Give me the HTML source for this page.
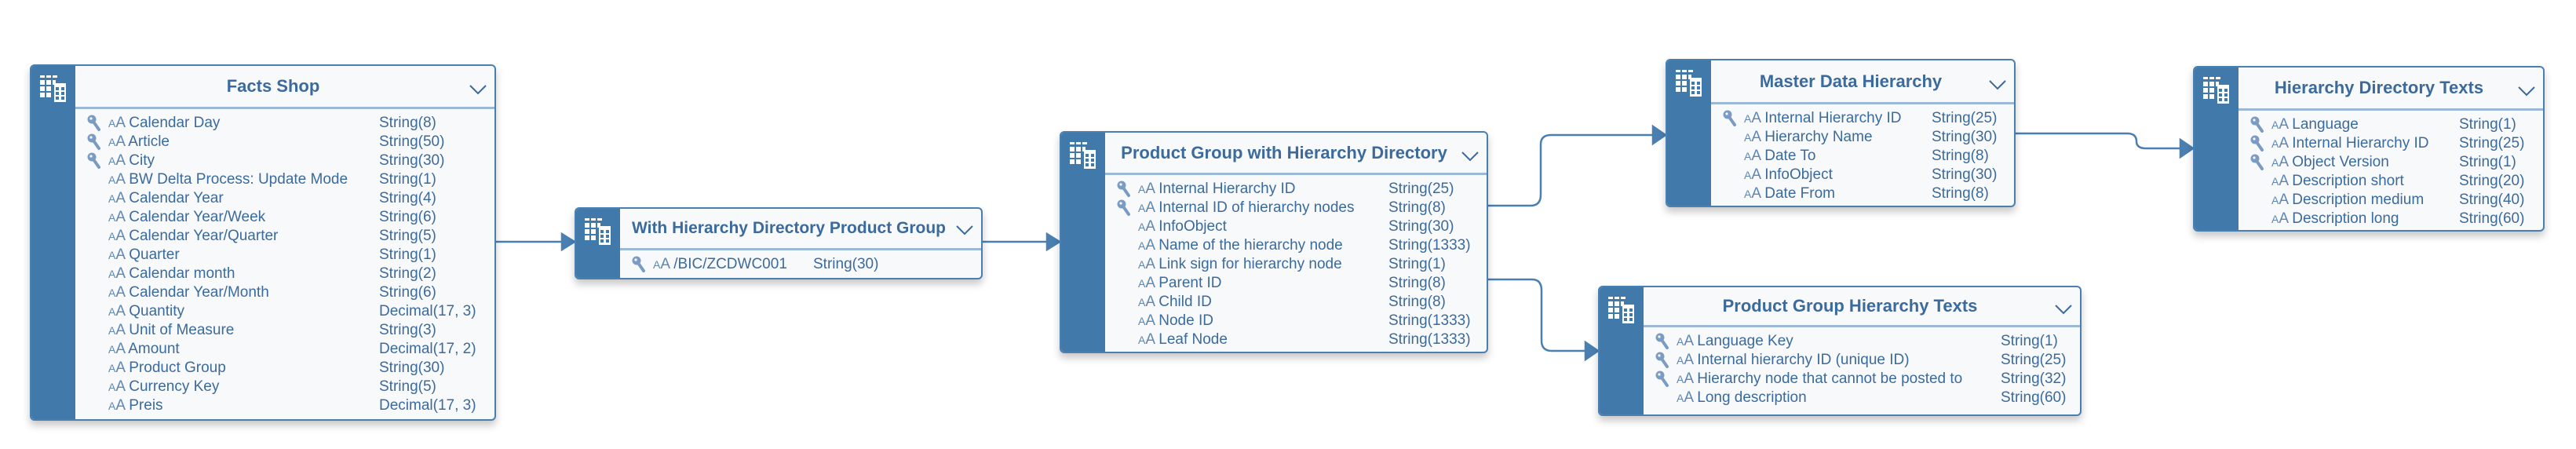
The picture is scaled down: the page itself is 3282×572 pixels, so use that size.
<!DOCTYPE html>
<html><head><meta charset="utf-8">
<style>
body{margin:0;width:3282px;height:572px;background:#fff;position:relative;overflow:hidden;font-family:"Liberation Sans",sans-serif;color:#3b6a9c}
.box{position:absolute;background:#f8f9fa;border:2px solid #4a7fb2;border-radius:6px;box-shadow:0 6px 10px rgba(0,0,0,.22);box-sizing:border-box;overflow:hidden}
.side{position:absolute;left:0;top:0;bottom:0;width:56px;background:#4279ab}
.side svg{position:absolute;left:8px;top:10px}
.hdr{position:absolute;left:56px;right:0;top:0;border-bottom:3px solid #9bb8d6;display:flex;align-items:center;justify-content:center;font-weight:bold;font-size:22px;color:#3b6a9c}
.chev{position:absolute;right:10px;top:50%;margin-top:-9px}
.row{position:absolute;height:24px;line-height:24px;font-size:19px;white-space:nowrap}
.aa{font-size:14px;color:#5f87b3}.aa b{font-weight:normal;font-size:19px}
.ty{position:absolute;font-size:19px;line-height:24px;white-space:nowrap}
.key{position:absolute}
</style></head><body>
<svg width="3282" height="572" style="position:absolute;left:0;top:0" fill="none" stroke="#4a7fb2" stroke-width="2.5">
<path d="M632 308H716"/><path d="M716 298L732 308L716 318Z" fill="#4a7fb2"/>
<path d="M1252 308H1334"/><path d="M1334 298L1350 308L1334 318Z" fill="#4a7fb2"/>
<path d="M1896 262H1950Q1963 262 1963 248V184Q1963 172 1976 172H2106"/><path d="M2106 161L2122 172L2106 183Z" fill="#4a7fb2"/>
<path d="M2568 170H2710Q2722 170 2722 180Q2722 189 2734 189H2778"/><path d="M2778 178L2794 189L2778 200Z" fill="#4a7fb2"/>
<path d="M1896 356H1952Q1964 356 1964 370V434Q1964 447 1977 447H2020"/><path d="M2020 436L2036 447L2020 458Z" fill="#4a7fb2"/>
</svg>
<div id="c"></div>
<script>
const ic='<svg width="40" height="40" viewBox="0 0 40 40" fill="#fff"><rect x="3" y="2" width="6" height="3"/><rect x="11" y="2" width="6" height="3"/><rect x="19" y="2" width="6" height="3"/><g><rect x="3" y="8" width="6" height="6"/><rect x="11" y="8" width="6" height="6"/><rect x="19" y="8" width="4" height="6"/><rect x="3" y="16" width="6" height="6"/><rect x="11" y="16" width="6" height="6"/><rect x="3" y="24" width="6" height="6"/><rect x="11" y="24" width="6" height="6"/></g><rect x="21" y="12" width="15" height="24" fill="#fff"/><g fill="#4279ab"><rect x="23" y="17" width="4" height="4"/><rect x="30" y="17" width="4" height="4"/><rect x="23" y="23" width="4" height="4"/><rect x="30" y="23" width="4" height="4"/><rect x="23" y="29" width="4" height="4"/><rect x="30" y="29" width="4" height="4"/></g></svg>';
const key='<svg width="18" height="22" viewBox="0 0 18 22"><circle cx="6" cy="6" r="5.5" fill="#7a9cc2"/><circle cx="5" cy="5" r="1.6" fill="#f8f9fa"/><path d="M8 9L15 19" stroke="#7a9cc2" stroke-width="4" stroke-linecap="round"/></svg>';
const chev='<svg width="22" height="14" viewBox="0 0 22 14"><path d="M1 2L11 12L21 2" fill="none" stroke="#3b6a9c" stroke-width="2"/></svg>';
function box(l,t,w,h,hh,title,tcol,rows,ts){
 let s=`<div class="box" style="left:${l}px;top:${t}px;width:${w}px;height:${h}px"><div class="side">${ic}</div><div class="hdr" style="height:${hh}px;font-size:${ts||22}px"><span style="margin-right:30px">${title}</span><span class="chev">${chev}</span></div>`;
 rows.forEach((r,i)=>{const y=hh+9+i*24;
  if(r[2])s+=`<span class="key" style="left:71px;top:${y+1}px">${key}</span>`;
  s+=`<div class="row" style="left:98px;top:${y}px"><span class="aa">A<b>A</b></span> ${r[0]}</div><div class="ty" style="left:${tcol}px;top:${y}px">${r[1]}</div>`;});
 return s+'</div>';}
let h='';
h+=box(38,82,594,454,52,'Facts Shop',443,[['Calendar Day','String(8)',1],['Article','String(50)',1],['City','String(30)',1],['BW Delta Process: Update Mode','String(1)'],['Calendar Year','String(4)'],['Calendar Year/Week','String(6)'],['Calendar Year/Quarter','String(5)'],['Quarter','String(1)'],['Calendar month','String(2)'],['Calendar Year/Month','String(6)'],['Quantity','Decimal(17, 3)'],['Unit of Measure','String(3)'],['Amount','Decimal(17, 2)'],['Product Group','String(30)'],['Currency Key','String(5)'],['Preis','Decimal(17, 3)']]);
h+=box(732,264,520,92,50,'With Hierarchy Directory Product Group',302,[['/BIC/ZCDWC001','String(30)',1]],21);
h+=box(1350,167,546,283,51,'Product Group with Hierarchy Directory',417,[['Internal Hierarchy ID','String(25)',1],['Internal ID of hierarchy nodes','String(8)',1],['InfoObject','String(30)'],['Name of the hierarchy node','String(1333)'],['Link sign for hierarchy node','String(1)'],['Parent ID','String(8)'],['Child ID','String(8)'],['Node ID','String(1333)'],['Leaf Node','String(1333)']]);
h+=box(2122,75,446,189,53,'Master Data Hierarchy',337,[['Internal Hierarchy ID','String(25)',1],['Hierarchy Name','String(30)'],['Date To','String(8)'],['InfoObject','String(30)'],['Date From','String(8)']]);
h+=box(2794,84,448,211,52,'Hierarchy Directory Texts',337,[['Language','String(1)',1],['Internal Hierarchy ID','String(25)',1],['Object Version','String(1)',1],['Description short','String(20)'],['Description medium','String(40)'],['Description long','String(60)']]);
h+=box(2036,364,616,166,48,'Product Group Hierarchy Texts',511,[['Language Key','String(1)',1],['Internal hierarchy ID (unique ID)','String(25)',1],['Hierarchy node that cannot be posted to','String(32)',1],['Long description','String(60)']]);
document.getElementById('c').innerHTML=h;
</script>
</body></html>
